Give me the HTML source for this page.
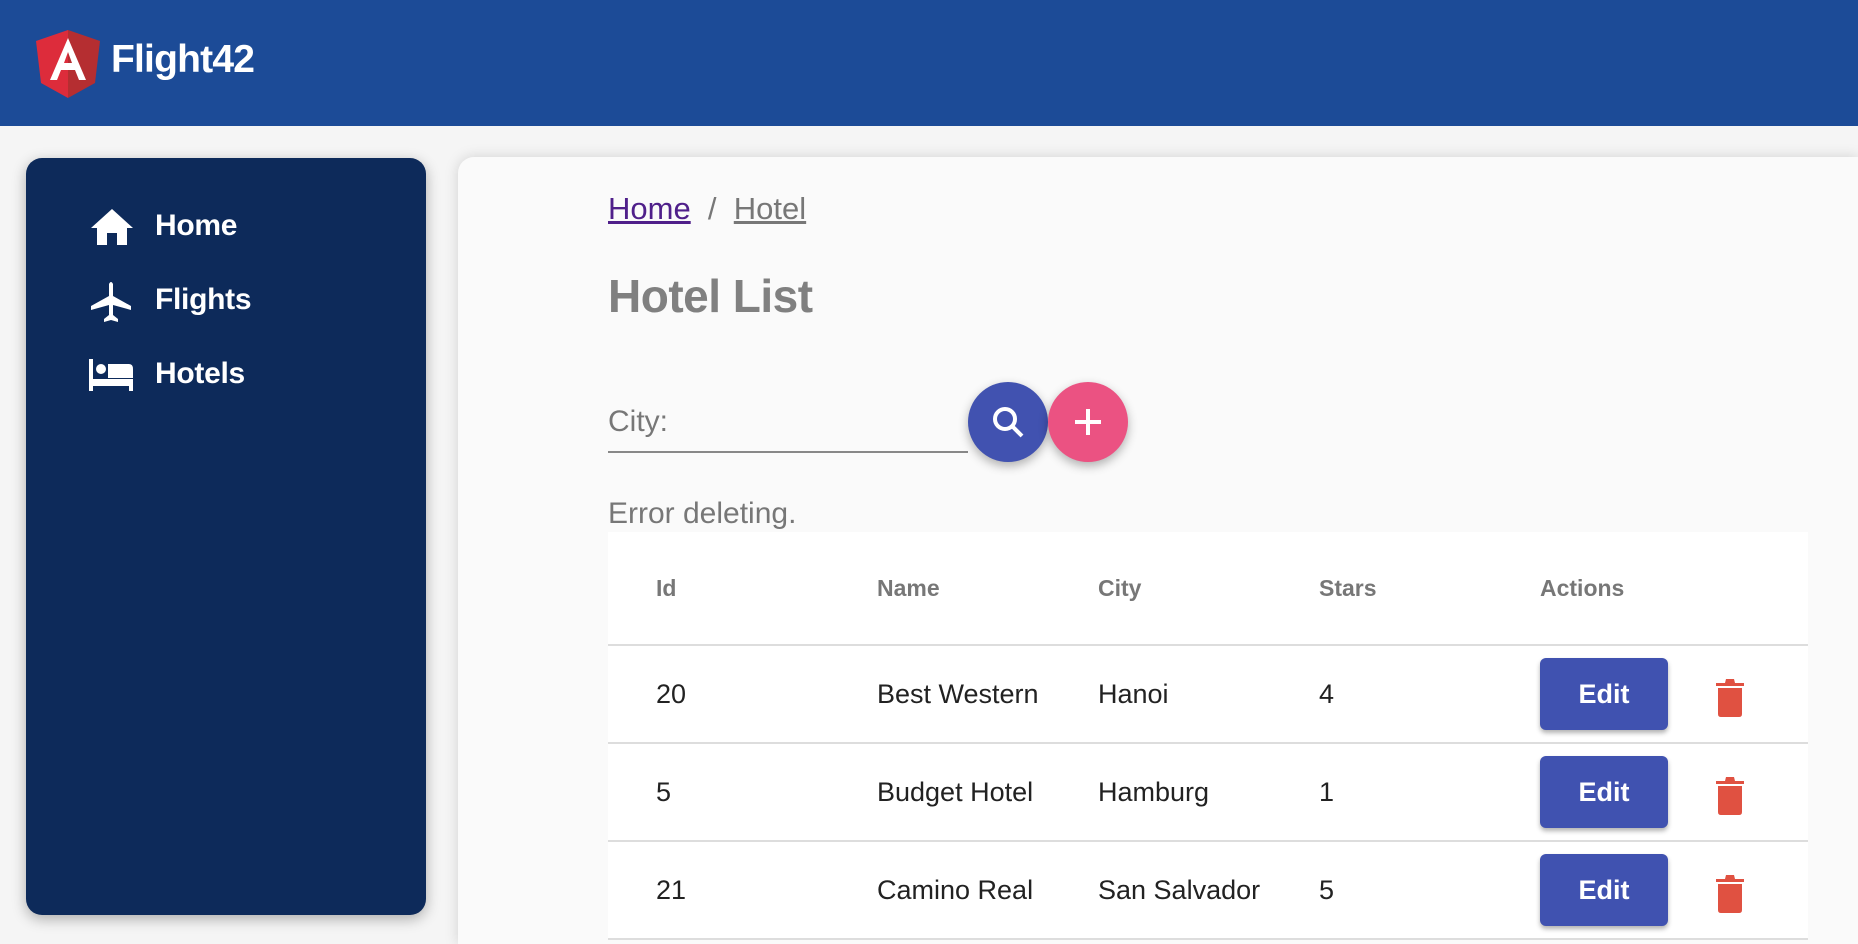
<!DOCTYPE html>
<html style="width:1858px;height:944px;overflow:hidden"><head><meta charset="utf-8"><style>
*{box-sizing:border-box;margin:0;padding:0}
body{width:1858px;height:944px;overflow:hidden;background:#f5f5f5;font-family:"Liberation Sans",Arial,sans-serif;position:relative}
.hdr{position:absolute;left:0;top:0;width:1858px;height:126px;background:#1c4b97}
.brand{position:absolute;left:111px;top:38px;color:#fff;font-size:39px;font-weight:bold;letter-spacing:-0.8px}
.side{position:absolute;left:26px;top:158px;width:400px;height:757px;background:#0d2a5a;border-radius:16px;box-shadow:0 4px 14px rgba(0,0,0,.3)}
.nav{position:absolute;left:155px;color:#fff;font-size:30px;font-weight:bold;letter-spacing:-0.3px}
.nav svg{position:absolute;left:-64px;top:0}
.card{position:absolute;left:458px;top:157px;width:1400px;height:787px;background:#fafafa;border-radius:16px 0 0 0;box-shadow:0 0 14px rgba(0,0,0,.15)}
.t{position:absolute;white-space:nowrap}
.fab{position:absolute;width:80px;height:80px;border-radius:50%;box-shadow:0 4px 10px rgba(0,0,0,.3)}
table{position:absolute;left:608px;top:532px;width:1200px;border-collapse:collapse;background:#fff}
th{height:113px;text-align:left;font-size:23px;color:#777;font-weight:bold;border-bottom:2px solid #ddd;padding-left:48px}
td{height:98px;font-size:27px;color:#222;border-bottom:2px solid #ddd;padding-left:48px}
.edit{display:inline-block;width:128px;height:72px;background:#4052b0;color:#fff;font-weight:bold;font-size:27px;line-height:72px;text-align:center;border-radius:6px;box-shadow:0 3px 5px rgba(0,0,0,.3);vertical-align:middle}
.tr{margin-left:48px;vertical-align:middle;position:relative;top:4px}
</style></head><body>
<div class="hdr">
<svg style="position:absolute;left:36px;top:30px" width="64" height="68" viewBox="0 0 64 68"><polygon points="32,0 64,11 59,53 32,68" fill="#b52e31"/><polygon points="32,0 0,11 5,53 32,68" fill="#dd2c3b"/><path d="M32 8 L14 50 H21 L25 40 H39 L43 50 H50 Z M28 33 L32 22 L36 33 Z" fill="#fff"/></svg>
<div class="brand">Flight42</div>
</div>
<div class="side"></div>
<div class="nav" style="top:209px"><svg width="42" height="36" viewBox="0 0 42 36"><path d="M21 0 L42 19 H36 V36 H26 V24 H16 V36 H6 V19 H0 Z" fill="#fff"/></svg>Home</div>
<div class="nav" style="top:283px"><svg width="40" height="42" viewBox="0 0 40 42" style="top:-2px"><path d="M18 3 Q20 -1 22 3 V15 L40 25 V29 L22 24 V34 L27 38 V41 L20 39 L13 41 V38 L18 34 V24 L0 29 V25 L18 15 Z" fill="#fff"/></svg>Flights</div>
<div class="nav" style="top:357px"><svg width="46" height="32" viewBox="0 0 46 32" style="left:-66px;top:2px"><path d="M0 0 H4 V20 H44 V32 H40 V27 H4 V32 H0 Z M12 5 A5 5 0 1 1 12 15 A5 5 0 1 1 12 5 Z M19 5 H40 Q44 5 44 10 V19 H19 Z" fill="#fff"/></svg>Hotels</div>
<div class="card"></div>
<div class="t" style="left:608px;top:191px;font-size:31px;color:#777"><span style="color:#4f1f8a;text-decoration:underline">Home</span>&nbsp;&nbsp;/&nbsp;&nbsp;<span style="text-decoration:underline">Hotel</span></div>
<div class="t" style="left:608px;top:269px;font-size:46px;font-weight:bold;color:#808080;letter-spacing:-0.5px">Hotel List</div>
<div class="t" style="left:608px;top:405px;font-size:30px;color:#777">City:</div>
<div style="position:absolute;left:608px;top:451px;width:360px;height:2px;background:#888"></div>
<div class="fab" style="left:968px;top:382px;background:#4152b0"><svg width="80" height="80" viewBox="0 0 80 80"><circle cx="37" cy="37" r="10" stroke="#fff" stroke-width="4" fill="none"/><path d="M44 44 L54 54" stroke="#fff" stroke-width="4"/></svg></div>
<div class="fab" style="left:1048px;top:382px;background:#eb5282"><svg width="80" height="80" viewBox="0 0 80 80"><path d="M40 27 V53 M27 40 H53" stroke="#fff" stroke-width="4"/></svg></div>
<div class="t" style="left:608px;top:497px;font-size:30px;color:#777">Error deleting.</div>
<table>
<tr><th style="width:221px">Id</th><th style="width:221px">Name</th><th style="width:221px">City</th><th style="width:221px">Stars</th><th>Actions</th></tr>
<tr><td>20</td><td>Best Western</td><td>Hanoi</td><td>4</td><td><span class="edit">Edit</span><svg class="tr" width="28" height="38" viewBox="0 0 28 38"><path d="M0 4 H9 L10 0 H18 L19 4 H28 V7 H0 Z M2 9 H26 V35 Q26 38 23 38 H5 Q2 38 2 35 Z" fill="#e05141"/></svg></td></tr>
<tr><td>5</td><td>Budget Hotel</td><td>Hamburg</td><td>1</td><td><span class="edit">Edit</span><svg class="tr" width="28" height="38" viewBox="0 0 28 38"><path d="M0 4 H9 L10 0 H18 L19 4 H28 V7 H0 Z M2 9 H26 V35 Q26 38 23 38 H5 Q2 38 2 35 Z" fill="#e05141"/></svg></td></tr>
<tr><td>21</td><td>Camino Real</td><td>San Salvador</td><td>5</td><td><span class="edit">Edit</span><svg class="tr" width="28" height="38" viewBox="0 0 28 38"><path d="M0 4 H9 L10 0 H18 L19 4 H28 V7 H0 Z M2 9 H26 V35 Q26 38 23 38 H5 Q2 38 2 35 Z" fill="#e05141"/></svg></td></tr>
</table>
</body></html>
